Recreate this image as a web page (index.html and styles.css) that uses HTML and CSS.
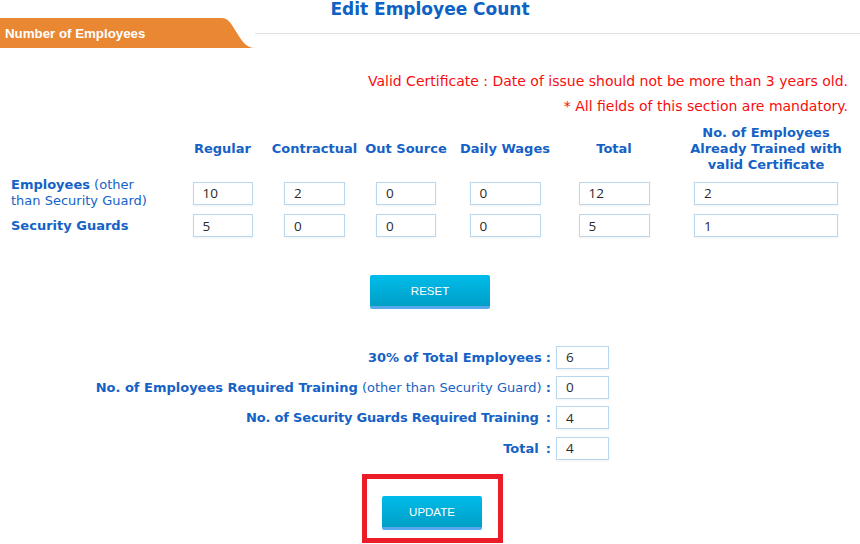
FILE: index.html
```html
<!DOCTYPE html>
<html lang="en">
<head>
<meta charset="utf-8">
<title>Edit Employee Count</title>
<link rel="stylesheet" href="styles.css">
</head>
<body>
<div class="page">
  <header class="top">
    <h1 class="title">Edit Employee Count</h1>
    <div class="tabbar">
      <div class="tab">
        <span class="tab-label">Number of Employees</span>
        <svg class="tab-curve" width="36" height="30" viewBox="0 0 36 30" aria-hidden="true">
          <path d="M0 0 H2 C11 0 13 8 18 15 C23 23 27 30 36 30 H0 Z" fill="#e98733"/>
        </svg>
      </div>
      <div class="tab-line"></div>
    </div>
  </header>

  <div class="notes">
    <p>Valid Certificate : Date of issue should not be more than 3 years old.</p>
    <p>* All fields of this section are mandatory.</p>
  </div>

  <div class="emp-grid">
    <div></div>
    <div class="col-head">Regular</div>
    <div class="col-head">Contractual</div>
    <div class="col-head">Out Source</div>
    <div class="col-head">Daily Wages</div>
    <div class="col-head">Total</div>
    <div class="col-head">No. of Employees<br>Already Trained with<br>valid Certificate</div>

    <div class="row-label"><b>Employees</b> (other<br>than Security Guard)</div>
    <div class="cell"><input class="field w60" value="10"></div>
    <div class="cell"><input class="field w61" value="2"></div>
    <div class="cell"><input class="field w60" value="0"></div>
    <div class="cell"><input class="field w71" value="0"></div>
    <div class="cell"><input class="field w71" value="12"></div>
    <div class="cell"><input class="field w144" value="2"></div>

    <div class="row-label"><b>Security Guards</b></div>
    <div class="cell"><input class="field w60" value="5"></div>
    <div class="cell"><input class="field w61" value="0"></div>
    <div class="cell"><input class="field w60" value="0"></div>
    <div class="cell"><input class="field w71" value="0"></div>
    <div class="cell"><input class="field w71" value="5"></div>
    <div class="cell"><input class="field w144" value="1"></div>
  </div>

  <div class="actions reset-wrap">
    <button class="btn" type="button">RESET</button>
  </div>

  <div class="summary">
    <div class="sum-label"><b>30% of Total Employees</b> <b class="colon">:</b></div>
    <input class="field sum-field" value="6">
    <div class="sum-label"><b>No. of Employees Required Training</b> (other than Security Guard) <b class="colon">:</b></div>
    <input class="field sum-field" value="0">
    <div class="sum-label"><b class="tight">No. of Security Guards Required Training</b> <b class="colon wide">:</b></div>
    <input class="field sum-field" value="4">
    <div class="sum-label"><b>Total</b> <b class="colon wide">:</b></div>
    <input class="field sum-field" value="4">
  </div>

  <div class="actions update-wrap">
    <div class="highlight">
      <button class="btn btn-update" type="button">UPDATE</button>
    </div>
  </div>
</div>
</body>
</html>
```

FILE: styles.css
```css
* { box-sizing: border-box; }

html, body {
  margin: 0;
  padding: 0;
  background: #ffffff;
}

body {
  font-family: "DejaVu Sans", Verdana, sans-serif;
  font-size: 13px;
  color: #1562c6;
}

.page {
  width: 860px;
  height: 544px;
  overflow: hidden;
}

.title {
  margin: 0;
  height: 18px;
  line-height: 18px;
  font-size: 17px;
  font-weight: bold;
  text-align: center;
  color: #0d62c4;
}

.tabbar {
  display: flex;
  align-items: center;
  height: 30px;
}

.tab {
  display: flex;
  height: 30px;
}

.tab-label {
  width: 219px;
  height: 30px;
  padding-left: 5px;
  background: #e98733;
  color: #ffffff;
  font-family: "Liberation Sans", Arial, sans-serif;
  font-weight: bold;
  font-size: 13.3px;
  line-height: 32px;
}

.tab-curve { display: block; }

.tab-line {
  flex: 1;
  height: 0;
  border-top: 1px solid #e2e2e2;
}

.notes {
  margin-top: 21px;
  padding-right: 12px;
  text-align: right;
  color: #f80d0d;
  font-size: 14px;
}

.notes p {
  margin: 0;
  line-height: 25px;
}

.emp-grid {
  display: grid;
  grid-template-columns: 177px 91px 93px 90px 108px 110px 194px;
  grid-template-rows: 48px 32px 25px;
  row-gap: 4px;
  margin-top: 6px;
  align-items: center;
}

.col-head {
  text-align: center;
  font-weight: bold;
  line-height: 16px;
}

.row-label {
  padding-left: 11px;
  line-height: 16px;
}

.cell {
  display: flex;
  justify-content: center;
}

.field {
  height: 23px;
  padding: 0 0 0 9px;
  border: 1px solid #b9d7ee;
  background: #ffffff;
  box-shadow: 0 1px 2px rgba(0, 0, 0, 0.06);
  font-family: "Open Sans", "Noto Sans", sans-serif;
  font-size: 13.5px;
  color: #2a2a2a;
  outline: none;
}

.w60 { width: 60px; }
.w61 { width: 61px; }
.w71 { width: 71px; }
.w144 { width: 144px; }

.actions {
  display: flex;
  justify-content: center;
}

.reset-wrap {
  margin-top: 37px;
}

.btn {
  width: 120px;
  height: 34px;
  padding: 0;
  border: 0;
  border-bottom: 3px solid #58a8ee;
  border-radius: 2px;
  background: linear-gradient(#00bcea, #009fc6);
  color: #ffffff;
  font-family: "Liberation Sans", Arial, sans-serif;
  font-size: 11.5px;
  cursor: pointer;
}

.summary {
  display: grid;
  grid-template-columns: 551px 53px;
  grid-auto-rows: 30.3px;
  column-gap: 5px;
  align-items: center;
  margin-top: 33px;
}

.sum-label {
  text-align: right;
}

.tight {
  letter-spacing: -0.2px;
}

.colon.wide {
  padding-left: 3px;
}

.sum-field {
  width: 53px;
}

.update-wrap {
  margin-top: 11px;
}

.highlight {
  margin-left: 5px;
  border: 5px solid #ea1c27;
  padding: 17px 16px 8px 15px;
}

.btn-update {
  width: 100px;
}
```
